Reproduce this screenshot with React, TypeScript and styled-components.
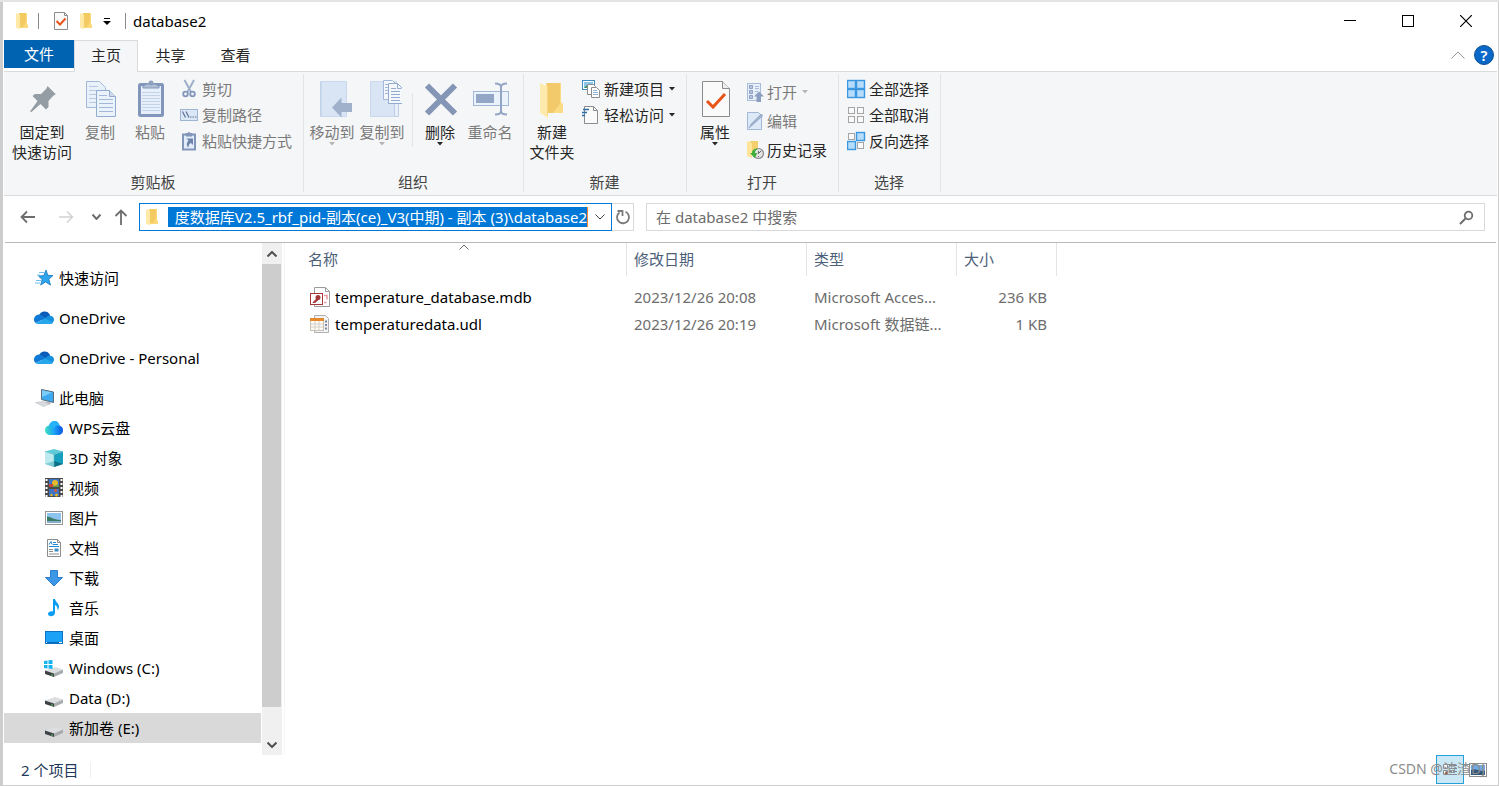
import React from "react";
import styled, { createGlobalStyle } from "styled-components";

const Global = createGlobalStyle`
  * { box-sizing: border-box; }
  body {
    margin: 0;
    background: #d2d2d2;
    font: 15px/20px "Noto Sans", "Noto Sans CJK SC", sans-serif;
    color: #000;
  }
  button, input { font: inherit; color: inherit; }
  button { background: none; border: 0; padding: 0; margin: 0; }
  svg { display: block; flex: none; }
`;

/* ---------- window frame ---------- */

const Desktop = styled.div`
  min-height: 100vh;
  padding: 2px 1px 1px 3px;
  display: flex;
  background: linear-gradient(#e4e4e4 0 2px, #cdcdcd 2px);
`;
const Window = styled.div`
  position: relative;
  flex: 1;
  min-width: 0;
  padding: 0 1px;
  display: flex;
  flex-direction: column;
  background: #fff;
`;

const TitleBar = styled.header`
  display: flex;
  align-items: center;
  height: 38px;
  padding: 0 2px 0 8px;
`;
const QuickButton = styled.button<{ $w: number }>`
  width: ${(p) => p.$w}px;
  display: flex;
  justify-content: center;
`;
const TitleDivider = styled.i`
  width: 1px;
  height: 16px;
  margin: 0 7px;
  background: #8a8a8a;
`;
const WindowTitle = styled.h1`
  flex: 1;
  margin: 0;
  font-size: 15px;
  line-height: 20px;
  font-weight: 400;
`;
const WindowButton = styled.button`
  width: 58px;
  height: 38px;
  display: flex;
  align-items: center;
  justify-content: center;
`;

/* ---------- ribbon tabs ---------- */

const TabBar = styled.nav`
  display: flex;
  height: 32px;
  border-bottom: 1px solid #dadbdc;
`;
const Tab = styled.button<{ $kind: "file" | "active" | "plain" }>`
  width: ${(p) => (p.$kind === "file" ? 70 : p.$kind === "active" ? 64 : 65)}px;
  height: ${(p) => (p.$kind === "file" ? 28 : 32)}px;
  padding-bottom: ${(p) => (p.$kind === "file" ? 0 : p.$kind === "active" ? 4 : 2)}px;
  color: ${(p) => (p.$kind === "file" ? "#fff" : "#262626")};
  background: ${(p) => (p.$kind === "file" ? "#0063b1" : p.$kind === "active" ? "#f5f6f7" : "none")};
  border: ${(p) => (p.$kind === "active" ? "1px solid #dadbdc" : "0")};
  border-bottom: 0;
`;
const TabTools = styled.div`
  margin-left: auto;
  display: flex;
  align-items: center;
  gap: 9px;
  padding: 0 3px 2px 0;
`;
const HelpButton = styled.button`
  width: 20px;
  height: 20px;
  border: 1px solid #10508c;
  border-radius: 50%;
  background: #0a69c8;
  color: #fff;
  font-size: 15px;
  line-height: 18px;
  font-weight: 600;
`;

/* ---------- ribbon ---------- */

const Ribbon = styled.div`
  display: flex;
  height: 124px;
  padding: 2px 0 3px;
  background: #f5f6f7;
  border-bottom: 1px solid #dadbdc;
`;
const Group = styled.section<{ $w: number; $pad: number }>`
  width: ${(p) => p.$w}px;
  padding-left: ${(p) => p.$pad}px;
  flex: none;
  display: flex;
  flex-direction: column;
  justify-content: space-between;
  border-right: 1px solid #e2e3e4;
`;
const GroupTools = styled.div`
  display: flex;
  padding-top: 2px;
`;
const GroupName = styled.h2<{ $pad: number }>`
  margin: 0 1px 0 -${(p) => p.$pad}px;
  font-size: 15px;
  line-height: 20px;
  font-weight: 400;
  text-align: center;
  color: #444;
`;
const BigButton = styled.button<{ $w?: number }>`
  width: ${(p) => p.$w ?? 50}px;
  padding-top: 4px;
  display: flex;
  flex-direction: column;
  align-items: center;
  color: #262626;
  white-space: pre-line;
  &:disabled { color: #7a7a7a; }
  > svg:first-child { margin-bottom: 4px; }
`;
const ToolDivider = styled.i`
  width: 1px;
  height: 54px;
  margin: 17px 2px 0 5px;
  background: #e2e3e4;
`;
const SmallList = styled.div<{ $tall?: boolean }>`
  display: grid;
  grid-auto-rows: ${(p) => (p.$tall ? 29 : 26)}px;
  align-content: start;
  padding: ${(p) => (p.$tall ? 1 : 0)}px 0 0 5px;
`;
const SmallButton = styled.button`
  display: flex;
  align-items: center;
  gap: 2px;
  color: #262626;
  white-space: nowrap;
  &:disabled { color: #7a7a7a; }
`;
const ArrowSlot = styled.span`
  padding-left: 2px;
`;

/* ---------- address row ---------- */

const AddressRow = styled.div`
  display: flex;
  align-items: flex-start;
  height: 47px;
  margin: 0 1px;
  padding: 7px 11px 0 9px;
  border-bottom: 1px solid #b9b9b9;
`;
const NavButton = styled.button<{ $w: number }>`
  width: ${(p) => p.$w}px;
  height: 28px;
  flex: none;
  display: flex;
  align-items: center;
  justify-content: center;
`;
const AddressBox = styled.div`
  flex: 473 473 473px;
  min-width: 0;
  height: 28px;
  display: flex;
  align-items: center;
  padding-left: 5px;
  border: 1px solid #0078d7;
`;
const AddressInput = styled.input`
  flex: 1;
  min-width: 0;
  height: 20px;
  margin-left: 9px;
  padding: 0;
  border: 0;
  border-right: 1px solid #ff8728;
  outline: 0;
  background: #0078d7;
  color: #fff;
  text-align: right;
`;
const DropButton = styled.button`
  width: 23px;
  display: flex;
  justify-content: center;
`;
const RefreshButton = styled.button`
  width: 22px;
  height: 28px;
  flex: none;
  display: flex;
  align-items: center;
  justify-content: center;
  border: 1px solid #d9d9d9;
  border-left: 0;
`;
const SearchBox = styled.label`
  flex: 839 839 839px;
  min-width: 0;
  height: 28px;
  margin-left: 12px;
  padding: 0 10px 0 9px;
  display: flex;
  align-items: center;
  border: 1px solid #d9d9d9;
`;
const SearchInput = styled.input`
  flex: 1;
  min-width: 0;
  padding: 0;
  border: 0;
  outline: 0;
  background: none;
  &::placeholder { color: #6d6d6d; opacity: 1; }
`;

/* ---------- body ---------- */

const Body = styled.div`
  flex: 1;
  display: flex;
`;
const Sidebar = styled.nav`
  width: 257px;
  flex: none;
  padding-top: 20px;
`;
const TreeItem = styled.a<{ $level: number; $selected?: boolean; $last?: boolean }>`
  display: flex;
  align-items: center;
  gap: 5px;
  height: 30px;
  margin-bottom: ${(p) => (p.$level === 0 && !p.$last ? 10 : 0)}px;
  padding-left: ${(p) => (p.$level === 0 ? 30 : 40)}px;
  color: #000;
  text-decoration: none;
  background: ${(p) => (p.$selected ? "#d9d9d9" : "none")};
`;
const ScrollTrack = styled.div`
  width: 20px;
  margin-left: 1px;
  flex: none;
  display: flex;
  flex-direction: column;
  background: #f0f0f0;
`;
const ScrollArrow = styled.button`
  width: 19px;
  height: 21px;
  display: flex;
  align-items: center;
  justify-content: center;
`;
const ScrollThumb = styled.div`
  width: 19px;
  flex: 443 1 0;
  background: #cdcdcd;
`;
const ScrollRest = styled.div`
  flex: 27 1 0;
`;
const Main = styled.main`
  flex: 1;
  min-width: 0;
  margin-left: 2px;
  padding-left: 16px;
  border-left: 1px solid #f5f5f5;
`;
const FileTable = styled.table`
  width: 756px;
  table-layout: fixed;
  border-collapse: collapse;
`;
const HeadCell = styled.th<{ $w: number }>`
  position: relative;
  width: ${(p) => p.$w}px;
  padding: 0 0 7px;
  text-align: left;
  font-weight: 400;
  color: #4c607a;
`;
const HeadLabel = styled.div`
  height: 33px;
  padding: 6px 7px;
  border-right: 1px solid #e5e5e5;
`;
const SortMark = styled.span`
  position: absolute;
  top: 1px;
  left: 0;
  right: 0;
  display: flex;
  justify-content: center;
`;
const Cell = styled.td<{ $right?: boolean }>`
  height: 27px;
  padding: 0 ${(p) => (p.$right ? 10 : 7)}px 0 7px;
  color: #6d6d6d;
  text-align: ${(p) => (p.$right ? "right" : "left")};
  white-space: nowrap;
`;
const FileName = styled.a`
  display: flex;
  align-items: center;
  gap: 5px;
  padding-left: 2px;
  color: #000;
  text-decoration: none;
`;

/* ---------- status bar ---------- */

const StatusBar = styled.footer`
  display: flex;
  align-items: center;
  height: 30px;
  padding: 0 10px 1px 17px;
`;
const StatusText = styled.span`
  padding-right: 12px;
  line-height: 16px;
  border-right: 1px solid #f0f0f0;
  color: #1e395b;
`;
const ViewButton = styled.button<{ $active?: boolean }>`
  width: 28px;
  height: 29px;
  display: flex;
  align-items: center;
  justify-content: center;
  background: ${(p) => (p.$active ? "#cbe8f6" : "none")};
  border: ${(p) => (p.$active ? "1px solid #26a0da" : "0")};
`;
const ViewButtons = styled.div`
  margin-left: auto;
  margin-right: -5px;
  display: flex;
`;
const Watermark = styled.span`
  position: absolute;
  right: 13px;
  bottom: 6px;
  font-size: 14px;
  color: #8c8c8c;
  pointer-events: none;
`;

/* ---------- icons ---------- */

type DrawProps = { w: number; h: number; children: React.ReactNode };
const Draw = ({ w, h, children }: DrawProps) => (
  <svg width={w} height={h} viewBox={`0 0 ${w} ${h}`} fill="none" aria-hidden="true">
    {children}
  </svg>
);

const FolderIcon = () => (
  <Draw w={14} h={18}>
    <path d="M4 1h8v11l1 1v3H5z" fill="#fbd978" />
    <path d="M4 1h7v9l-3 5H4z" fill="#f4cb62" />
    <path d="M1 1l4 2v14.500l-4-2z" fill="#ffe9a6" />
  </Draw>
);
const CheckDocIcon = () => (
  <Draw w={16} h={20}>
    <path d="M1.500 1.500h10l3 3v14h-13z" fill="#fafafa" stroke="#8c8c8c" />
    <path d="M11.500 1.500v3h3" stroke="#8c8c8c" />
    <path d="M3.500 10l3.500 3.500 5.500-6" stroke="#e9541b" strokeWidth="2" />
  </Draw>
);
const CustomizeIcon = () => (
  <Draw w={8} h={8}>
    <path d="M1 1.500h6" stroke="#000" />
    <path d="M0 4h8L4 8z" fill="#000" />
  </Draw>
);
const DownArrow = ({ color = "#262626" }: { color?: string }) => (
  <Draw w={8} h={4}>
    <path d="M1 0h6L4 3.500z" fill={color} />
  </Draw>
);
const Chevron = ({ up, w = 10, h = 6, color = "#555", stroke = 1 }: { up?: boolean; w?: number; h?: number; color?: string; stroke?: number }) => (
  <Draw w={w} h={h}>
    <path d={up ? `M.5 ${h - 0.5}L${w / 2} 1l${w / 2 - 0.5} ${h - 1.5}` : `M.5 .5l${w / 2 - 0.5} ${h - 1.5}L${w - 0.5} .5`} stroke={color} strokeWidth={stroke} />
  </Draw>
);

const PinIcon = () => (
  <Draw w={40} h={38}>
    <path d="M25.500 6l8.300 8.300-2.300 1.200-5 5.500v6L24 29.500 18.500 24 9.500 32 8 31.500l7.500-10.500-5-5 2.500-2h6l5.500-5.500z" fill="#949da3" />
  </Draw>
);
const CopyIcon = () => (
  <Draw w={40} h={38}>
    <path d="M6.500 1.500h13l6 6v20h-19z" fill="#e8f0fa" stroke="#a3b8d6" />
    <path d="M9 6.500h9M9 10.500h13M9 14.500h13M9 18.500h8M9 22.500h8" stroke="#b8c9e1" />
    <path d="M16.500 10.500h13l6 6v20h-19z" fill="#eaf2fb" stroke="#93abce" />
    <path d="M29.500 10.500v6h6" fill="#cfdcec" stroke="#93abce" />
    <path d="M19 15.500h8M19 19.500h14M19 23.500h14M19 27.500h14M19 31.500h14" stroke="#a3b8d6" />
  </Draw>
);
const PasteIcon = () => (
  <Draw w={40} h={38}>
    <rect x="9.500" y="4.500" width="23" height="31" rx="1" fill="#e6effa" stroke="#8296bb" strokeWidth="3" />
    <path d="M12 12.500h18M12 15.500h18M12 18.500h18M12 21.500h18M12 24.500h18M12 27.500h18M12 30.500h18" stroke="#c3d3e8" />
    <path d="M13 8V6l4-2h8l4 2v2z" fill="#b0bed5" stroke="#8296bb" />
    <circle cx="21" cy="3" r="2.500" fill="#8fa1c0" />
  </Draw>
);
const CutIcon = () => (
  <Draw w={20} h={20}>
    <path d="M4.500 1l6.500 12M14 1L7.500 13" stroke="#9fb0cb" strokeWidth="2" />
    <circle cx="5.500" cy="15" r="2.300" stroke="#8296bb" strokeWidth="1.800" />
    <circle cx="12.500" cy="15" r="2.300" stroke="#8296bb" strokeWidth="1.800" />
  </Draw>
);
const PathIcon = () => (
  <Draw w={20} h={20}>
    <rect x=".5" y="4.500" width="17" height="11" fill="#dbe7f6" stroke="#9fb4d3" />
    <path d="M2.500 6.500l3 6M6 6.500l3 6M10 12h1.500M12.500 12H14M15 12h1.500" stroke="#5e7299" strokeWidth="1.200" />
  </Draw>
);
const ShortcutIcon = () => (
  <Draw w={20} h={20}>
    <rect x="3" y="3.500" width="12" height="15" fill="#e3edf9" stroke="#8296bb" strokeWidth="2" />
    <path d="M6 5h6V2.500H10a1 1 0 0 0-2 0H6z" fill="#8296bb" stroke="#8296bb" />
    <path d="M6.500 7.500H13V14l-2-2c-2 1-2.500 2-2.500 4.500-2.500-2-2-4.500 0-7z" fill="#6f84ab" />
  </Draw>
);
const MoveToIcon = () => (
  <Draw w={40} h={38}>
    <path d="M8.500 1.500h26v35h-26z" fill="#d9e5f5" stroke="#c8d8ed" />
    <path d="M9 2v34" stroke="#bccde5" />
    <path d="M20 27.500l9.500-10v5.500H40v9H29.500v5.500z" fill="#a0b1cc" />
  </Draw>
);
const CopyToIcon = () => (
  <Draw w={40} h={38}>
    <path d="M8.500 1.500h26v35h-26z" fill="#d9e5f5" stroke="#c8d8ed" />
    <path d="M32.500 36.500v-12l2-2h2v14z" fill="#e7effa" stroke="#bccde5" />
    <path d="M21.500.5h9l3 3v16h-12z" fill="#f4f8fd" stroke="#a3b8d6" />
    <path d="M23 4.500h4M23 7.500h4M23 10.500h4M23 13.500h4" stroke="#a3b8d6" />
    <path d="M26.500 3.500h9l5 5v15h-14z" fill="#f4f8fd" stroke="#93abce" />
    <path d="M35.500 3.500v5h4" stroke="#93abce" />
    <path d="M29 8.500h5M29 11.500h9M29 14.500h9M29 17.500h9M29 20.500h9" stroke="#93abce" />
  </Draw>
);
const DeleteIcon = () => (
  <Draw w={40} h={38}>
    <path d="M7 5.500l28 28M35 5.500l-28 28" stroke="#8495b6" strokeWidth="6" />
  </Draw>
);
const RenameIcon = () => (
  <Draw w={40} h={38}>
    <rect x="3.500" y="11.500" width="35" height="14" fill="#eaf2fb" stroke="#a3b8d6" />
    <rect x="6" y="14" width="18" height="9" fill="#93a6c6" />
    <path d="M25 3.500c3.500 0 6 .5 6 3.500 0-3 2.500-3.500 6-3.500M31 6v26M25 34.500c3.500 0 6-.5 6-3.500 0 3 2.500 3.500 6 3.500" stroke="#93a6c6" strokeWidth="2" />
  </Draw>
);
const NewFolderIcon = () => (
  <Draw w={40} h={38}>
    <path d="M14 3h15v19l2 2v9H14z" fill="#fbdc85" />
    <path d="M15 3h13v21l-7 9h-6z" fill="#f2ca6b" />
    <path d="M8 3l8 4v31l-8-5z" fill="#ffeaae" />
    <path d="M15.500 7v28" stroke="#f7d67e" />
  </Draw>
);
const PropertiesIcon = () => (
  <Draw w={40} h={38}>
    <path d="M7.500 1.500h20l7 7v28h-27z" fill="#fafafa" stroke="#8c8c8c" />
    <path d="M27.500 1.500v7h7" fill="#eee" stroke="#8c8c8c" />
    <path d="M12 21l6 6 12-13" stroke="#e9541b" strokeWidth="3" />
  </Draw>
);
const NewItemIcon = () => (
  <Draw w={20} h={20}>
    <rect x=".5" y="1.500" width="12" height="9" fill="#fff" stroke="#3d8ec4" />
    <rect x="2" y="3" width="9" height="6" fill="#8cc8ea" />
    <path d="M2 9l3-3 3 3z" fill="#3f8f5d" />
    <path d="M5.500 5.500h6l2 2v8h-8z" fill="#fff" stroke="#8c8c8c" />
    <path d="M9.500 8.500h5l3 3v7h-8z" fill="#fff" stroke="#8c8c8c" />
    <path d="M11 11.500h4M11 13.500h5M11 15.500h5" stroke="#8fb4d6" />
  </Draw>
);
const EasyAccessIcon = () => (
  <Draw w={20} h={20}>
    <path d="M2.500 1.500h9l4 4v13h-13z" fill="#fafafa" stroke="#8c8c8c" />
    <path d="M11.500 1.500v4h4" stroke="#8c8c8c" />
    <path d="M1 4.500h6M0 7.500h5M-1 10.500h4" stroke="#2c6ea8" strokeWidth="1.300" />
  </Draw>
);
const OpenIcon = () => (
  <Draw w={20} h={20}>
    <rect x="2.500" y="1.500" width="13" height="17" fill="#e6effa" stroke="#a8bbd8" />
    <path d="M4.500 3.500h3v3h-3zM4.500 8.500h3v3h-3zM4.500 13.500h3v3h-3z" fill="#b4c4de" stroke="#8fa2c3" />
    <path d="M10 4.500h4M10 6.500h4M10 9.500h3" stroke="#a8bbd8" />
    <path d="M14 9.500l5 5h-3V20h-4.500v-5.500H9z" fill="#8d9fc0" />
  </Draw>
);
const EditIcon = () => (
  <Draw w={20} h={20}>
    <path d="M2.500 1.500h11l3 3v14h-14z" fill="#dde9f7" stroke="#a3b8d6" />
    <path d="M4 17l2-4L16 3l2 1.500-11 10z" fill="#a0b1cc" stroke="#8da1c2" strokeWidth=".6" />
  </Draw>
);
const HistoryIcon = () => (
  <Draw w={20} h={20}>
    <path d="M5 1h8v12H5z" fill="#f4cf6d" />
    <path d="M2 1l5 2v15l-5-2z" fill="#ffe49a" />
    <circle cx="13.500" cy="13.500" r="5" fill="#e2e2e2" stroke="#8c8c8c" strokeWidth="1.200" />
    <path d="M13.500 13.500l2.500-2.500M13.500 13.500v-2.500M13.500 16v1" stroke="#666" />
    <path d="M12 8.500C8 9 7 11 7 13H5l4.500 5 3-5H10c0-2 .5-3 2.500-3.500z" fill="#3fae3a" />
  </Draw>
);
const Tile = ({ x, y, on }: { x: number; y: number; on?: boolean }) => (
  <rect x={x + 0.5} y={y + 0.5} width={on ? 8 : 6} height={on ? 8 : 6} fill={on ? "#b5dcfa" : "#fafafa"} stroke={on ? "#3b97e0" : "#a5a5a5"} strokeWidth={on ? 1.400 : 1} />
);
const SelectAllIcon = () => (
  <Draw w={20} h={20}>
    <Tile x={0} y={1} on /><Tile x={9} y={1} on /><Tile x={0} y={10} on /><Tile x={9} y={10} on />
  </Draw>
);
const SelectNoneIcon = () => (
  <Draw w={20} h={20}>
    <Tile x={1} y={2} /><Tile x={10} y={2} /><Tile x={1} y={11} /><Tile x={10} y={11} />
  </Draw>
);
const InvertIcon = () => (
  <Draw w={20} h={20}>
    <Tile x={1} y={2} /><Tile x={9} y={1} on /><Tile x={0} y={10} on /><Tile x={10} y={11} />
  </Draw>
);

const ArrowIcon = ({ dir, color }: { dir: "left" | "right" | "up"; color: string }) => (
  <Draw w={16} h={16}>
    <path
      d={dir === "left" ? "M15 8H1.500M7 2.500L1.500 8 7 13.500" : dir === "right" ? "M1 8h13.500M9 2.500L14.500 8 9 13.500" : "M8 16V1.500M2.500 7L8 1.500 13.500 7"}
      stroke={color}
      strokeWidth={dir === "right" ? 1.500 : 1.800}
    />
  </Draw>
);
const RefreshIcon = () => (
  <Draw w={16} h={16}>
    <path d="M10.500 2.800a6 6 0 1 1-6 .6" stroke="#7a7a7a" strokeWidth="1.800" />
    <path d="M2.500 2h5v5" stroke="#7a7a7a" strokeWidth="1.800" />
  </Draw>
);
const SearchIcon = () => (
  <Draw w={15} h={15}>
    <circle cx="9.500" cy="5.500" r="3.800" stroke="#6d6d6d" strokeWidth="1.800" />
    <path d="M6.500 8.500L1 14" stroke="#6d6d6d" strokeWidth="2" />
  </Draw>
);

const StarIcon = () => (
  <Draw w={20} h={20}>
    <path d="M12 2l1.800 5.300 5.200.3-4.200 3.500 1.700 6-5-3.200-4.800 3.200 1.500-5.600L4.500 8l5.300-.4z" fill="#2fa5ee" stroke="#1676bd" strokeWidth=".8" />
    <path d="M5 4.500h5M3 7h3M2 12.500h5M1 15h5" stroke="#6bbdf2" />
  </Draw>
);
const OneDriveIcon = () => (
  <Draw w={20} h={20}>
    <path d="M5 7.500A6 6 0 0 1 15.500 6c.5.700.5 1.500.5 2.500L9 12 3 8.500z" fill="#0a5cb8" />
    <path d="M5 6.500C2 6.700 0 9 0 11.500c0 1.500.6 2.500 1.500 3.500L12 10 7.500 7.200C6.600 6.700 6 6.500 5 6.500z" fill="#0f78d4" />
    <path d="M15.500 7.500c2.700.3 4.500 2 4.500 4 0 2.500-1.800 4.500-4 4.500L9 11.500l3-2c1-1 2-2 3.500-2z" fill="#1490df" />
    <path d="M1.500 15L11 10.500l8 4c-.8 1-1.800 1.500-3 1.500H4.500c-1.200 0-2.300-.4-3-1z" fill="#28a8ea" />
  </Draw>
);
const PcIcon = () => (
  <Draw w={20} h={20}>
    <path d="M7.500 1.500L19.500 4v10.500L7.500 11.500z" fill="#3ba8f0" stroke="#5c6b78" />
    <path d="M8 2.200L18 4.400 8 9z" fill="#7cccf9" />
    <path d="M12 13l5 1.500-1 2-5-1.500z" fill="#b4babf" />
    <path d="M1.500 14.500l8-1 6 2.500-6 2.500z" fill="#d7dbdf" stroke="#b3b9bf" strokeWidth=".5" />
  </Draw>
);
const WpsIcon = () => (
  <Draw w={20} h={20}>
    <defs>
      <linearGradient id="wps" x1="0" x2="1" y1="0.600" y2="0.500">
        <stop offset="0" stopColor="#3fe0c0" />
        <stop offset="0.500" stopColor="#1ba0f5" />
        <stop offset="1" stopColor="#0a52e0" />
      </linearGradient>
    </defs>
    <path d="M5 7.500C6 4.500 8 3 10.500 3s4.500 2 5 4.500c2 .5 3.500 2.500 3.500 4.700 0 2.800-2 4.800-4.800 4.800H5.500C3 17 1 15 1 12.300 1 9.700 2.700 7.700 5 7.500z" fill="url(#wps)" />
    <path d="M5 7.500C6 4.500 8 3 10.500 3s4.500 2 5 4.500C12 7 10.500 9 9.500 11 8.500 8.500 7 7.500 5 7.500z" fill="#27b3fb" />
  </Draw>
);
const CubeIcon = () => (
  <Draw w={20} h={20}>
    <path d="M1 3.500L10 1l9 2.500-9 3z" fill="#5ecbd8" />
    <path d="M1 3.500l9 3V19l-9-3z" fill="#bdeaee" />
    <path d="M19 3.500l-9 3V19l9-3z" fill="#17a0bd" />
    <path d="M10 13l9 3-9 3z" fill="#0c6f86" />
    <path d="M10 13l-9 3 9 3z" fill="#7ccbd5" />
    <path d="M1 3.500l9 3 9-3M10 6.500V19" stroke="#5ab8c4" strokeWidth=".6" />
  </Draw>
);
const VideoIcon = () => (
  <Draw w={20} h={20}>
    <rect x="1" y="0" width="18" height="19" fill="#4a4a4a" />
    <path d="M2.500 1v18M17.500 1v18" stroke="#fff" strokeWidth="2" strokeDasharray="2 2" />
    <path d="M5 1h10v8H5zM5 11h10v7H5z" fill="#3d74c6" />
    <circle cx="11" cy="5" r="3" fill="#e8b928" />
    <path d="M5 6h4v3H5z" fill="#c8453a" />
    <path d="M9 8l6-1v2H9z" fill="#5aa449" />
    <circle cx="11.500" cy="12.500" r="1.500" fill="#d9583b" />
    <circle cx="7.500" cy="17" r="1.200" fill="#e8b928" />
    <circle cx="12.500" cy="17" r="1.500" fill="#e8b928" />
  </Draw>
);
const PictureIcon = () => (
  <Draw w={20} h={20}>
    <rect x="1.500" y="3.500" width="17" height="13" fill="#fff" stroke="#959595" />
    <rect x="3" y="5" width="14" height="10" fill="#8cc4ef" />
    <path d="M3 8.500c4 0 5 3 14 3.500v2H3z" fill="#3b7a66" />
    <path d="M3 13h14v2H3z" fill="#86aeca" />
  </Draw>
);
const DocumentIcon = () => (
  <Draw w={20} h={20}>
    <path d="M3.500 1.500h10l3 3v14h-13z" fill="#fff" stroke="#8c8c8c" />
    <path d="M13.500 1.500v3h3" stroke="#8c8c8c" />
    <path d="M5 6.500l2-3 1 3M9 4.500h3M9 6.500h5M5 8.500h10" stroke="#1f87d2" />
    <path d="M5 11.500h4M5 13.500h4M5 16h10" stroke="#8c8c8c" />
    <path d="M10.500 10.500h4v3h-4z" fill="#3a8bc4" />
  </Draw>
);
const DownloadIcon = () => (
  <Draw w={20} h={20}>
    <path d="M6.500 2.500h7v7h5L10 18 1.500 9.500h5z" fill="#3c97e6" stroke="#2a7ecb" />
  </Draw>
);
const MusicIcon = () => (
  <Draw w={20} h={20}>
    <path d="M9 1h2c.5 3 4 4.500 4 7.500 0 1.500-.5 2.500-1.500 4 .3-3-.5-4.500-2.500-5.500v8c0 2-2 3.200-4 3.200-1.700 0-3-.9-3-2.200 0-1.700 1.800-2.700 3.500-2.700.6 0 1 .1 1.500.3z" fill="#089df2" />
  </Draw>
);
const DesktopIcon = () => (
  <Draw w={20} h={20}>
    <rect x="1.500" y="3.500" width="17" height="12" fill="#1ba1f5" stroke="#0b73c4" />
    <path d="M2 14.500h16" stroke="#0a66b4" />
    <path d="M2 14.500h1M15 14.500h3" stroke="#fff" />
  </Draw>
);
const DriveIcon = ({ windows }: { windows?: boolean }) => (
  <Draw w={20} h={20}>
    <path d="M1 12.500l10-3.500 8 2.500-9 4z" fill="#dcdee0" />
    <path d="M1 12.500l9 3V19l-9-3z" fill="#3d4246" />
    <path d="M10 15.500l9-4V15l-9 4z" fill="#a8acaf" />
    <circle cx="8" cy="17" r=".8" fill="#62d65a" />
    {windows && <path d="M0 3l3.500-.5V6H0zM4.500 2.300L8.500 2v4h-4zM0 7h3.500v3.500L0 10zM4.500 7h4v4l-4-.5z" fill="#16b4ef" />}
  </Draw>
);

const MdbIcon = () => (
  <Draw w={20} h={20}>
    <path d="M4.500.5h11l4 4v15h-15z" fill="#fff" stroke="#9c9c9c" />
    <path d="M15.500.5v4h4" stroke="#9c9c9c" />
    <path d="M14 8.500h3v4M14 15.500h2.500" stroke="#e59aa0" strokeWidth="1.500" />
    <rect x=".5" y="6.500" width="12" height="11" fill="#fff" stroke="#a4373a" />
    <circle cx="8" cy="10.500" r="2.500" fill="#a4373a" />
    <path d="M7.500 11L3 15.500h2L9 12z" fill="#a4373a" stroke="#a4373a" />
  </Draw>
);
const UdlIcon = () => (
  <Draw w={20} h={20}>
    <path d="M4.500 1.500h11l3 3v14h-14z" fill="#f3f3f3" stroke="#b0b0b0" />
    <path d="M16 6.500v9" stroke="#7c86a0" strokeWidth="2" strokeDasharray="2 1.500" />
    <rect x=".5" y="4.500" width="13" height="12" fill="#fdfbf8" stroke="#c9c0b4" />
    <path d="M0 4h14v3H0z" fill="#e58a2b" />
    <path d="M1 10h12M1 13h12M5 7v9M9 7v9" stroke="#d5cfc6" />
  </Draw>
);
const DetailsViewIcon = () => (
  <Draw w={20} h={20}>
    <path d="M3.500 4.500h4v4h-4zM3.500 10.500h4v4h-4z" fill="#fff" stroke="#8c8c8c" />
    <path d="M5 12h2v2H5z" fill="#c0392b" />
    <path d="M9 5.500h3M13 5.500h4M9 8.500h3M13 8.500h4M9 11.500h3M13 11.500h4M9 14.500h3M13 14.500h4" stroke="#7c8a94" />
  </Draw>
);
const LargeViewIcon = () => (
  <Draw w={18} h={14}>
    <rect x=".5" y=".5" width="17" height="13" fill="#fff" stroke="#8c8c8c" />
    <rect x="2" y="2" width="14" height="10" fill="#72a9e4" />
    <path d="M2 7c4-2 6 1 14 1v4H2z" fill="#33587a" />
  </Draw>
);

/* ---------- data ---------- */

const tree = [
  { label: "快速访问", icon: <StarIcon />, level: 0 },
  { label: "OneDrive", icon: <OneDriveIcon />, level: 0 },
  { label: "OneDrive - Personal", icon: <OneDriveIcon />, level: 0 },
  { label: "此电脑", icon: <PcIcon />, level: 0, last: true },
  { label: "WPS云盘", icon: <WpsIcon />, level: 1 },
  { label: "3D 对象", icon: <CubeIcon />, level: 1 },
  { label: "视频", icon: <VideoIcon />, level: 1 },
  { label: "图片", icon: <PictureIcon />, level: 1 },
  { label: "文档", icon: <DocumentIcon />, level: 1 },
  { label: "下载", icon: <DownloadIcon />, level: 1 },
  { label: "音乐", icon: <MusicIcon />, level: 1 },
  { label: "桌面", icon: <DesktopIcon />, level: 1 },
  { label: "Windows (C:)", icon: <DriveIcon windows />, level: 1 },
  { label: "Data (D:)", icon: <DriveIcon />, level: 1 },
  { label: "新加卷 (E:)", icon: <DriveIcon />, level: 1, selected: true },
];

const columns = [
  { label: "名称", w: 326, sorted: true },
  { label: "修改日期", w: 180 },
  { label: "类型", w: 150 },
  { label: "大小", w: 100 },
];

const files = [
  { name: "temperature_database.mdb", icon: <MdbIcon />, date: "2023/12/26 20:08", type: "Microsoft Acces...", size: "236 KB" },
  { name: "temperaturedata.udl", icon: <UdlIcon />, date: "2023/12/26 20:19", type: "Microsoft 数据链...", size: "1 KB" },
];

const GREY = "#b5b5b5";

type RibbonGroupProps = { name: string; w: number; pad?: number; children: React.ReactNode };
const RibbonGroup = ({ name, w, pad = 3, children }: RibbonGroupProps) => (
  <Group $w={w} $pad={pad}>
    <GroupTools>{children}</GroupTools>
    <GroupName $pad={pad}>{name}</GroupName>
  </Group>
);

export default function App() {
  return (
    <Desktop>
      <Global />
      <Window>
        <TitleBar>
          <QuickButton $w={19} aria-label="database2"><FolderIcon /></QuickButton>
          <TitleDivider />
          <QuickButton $w={30} aria-label="属性"><CheckDocIcon /></QuickButton>
          <QuickButton $w={20} aria-label="新建文件夹"><FolderIcon /></QuickButton>
          <QuickButton $w={22} aria-label="自定义快速访问工具栏"><CustomizeIcon /></QuickButton>
          <TitleDivider />
          <WindowTitle>database2</WindowTitle>
          <WindowButton aria-label="最小化"><Draw w={12} h={12}><path d="M0 5.500h12" stroke="#000" /></Draw></WindowButton>
          <WindowButton aria-label="最大化"><Draw w={12} h={12}><rect x=".5" y=".5" width="11" height="11" stroke="#000" /></Draw></WindowButton>
          <WindowButton aria-label="关闭"><Draw w={12} h={12}><path d="M0 0l12 12M12 0L0 12" stroke="#000" strokeWidth="1.200" /></Draw></WindowButton>
        </TitleBar>

        <TabBar>
          <Tab $kind="file">文件</Tab>
          <Tab $kind="active">主页</Tab>
          <Tab $kind="plain">共享</Tab>
          <Tab $kind="plain">查看</Tab>
          <TabTools>
            <button aria-label="最小化功能区"><Chevron up w={14} h={8} color="#9a9a9a" /></button>
            <HelpButton aria-label="帮助">?</HelpButton>
          </TabTools>
        </TabBar>

        <Ribbon>
          <RibbonGroup name="剪贴板" w={300} pad={5}>
            <BigButton $w={66}><PinIcon />{"固定到\n快速访问"}</BigButton>
            <BigButton disabled><CopyIcon />复制</BigButton>
            <BigButton disabled><PasteIcon />粘贴</BigButton>
            <SmallList>
              <SmallButton disabled><CutIcon />剪切</SmallButton>
              <SmallButton disabled><PathIcon />复制路径</SmallButton>
              <SmallButton disabled><ShortcutIcon />粘贴快捷方式</SmallButton>
            </SmallList>
          </RibbonGroup>
          <RibbonGroup name="组织" w={220}>
            <BigButton disabled><MoveToIcon />移动到<DownArrow color={GREY} /></BigButton>
            <BigButton disabled><CopyToIcon />复制到<DownArrow color={GREY} /></BigButton>
            <ToolDivider />
            <BigButton><DeleteIcon />删除<DownArrow /></BigButton>
            <BigButton disabled><RenameIcon />重命名</BigButton>
          </RibbonGroup>
          <RibbonGroup name="新建" w={163}>
            <BigButton><NewFolderIcon />{"新建\n文件夹"}</BigButton>
            <SmallList>
              <SmallButton><NewItemIcon />新建项目<ArrowSlot><DownArrow /></ArrowSlot></SmallButton>
              <SmallButton><EasyAccessIcon />轻松访问<ArrowSlot><DownArrow /></ArrowSlot></SmallButton>
            </SmallList>
          </RibbonGroup>
          <RibbonGroup name="打开" w={152}>
            <BigButton><PropertiesIcon />属性<DownArrow /></BigButton>
            <SmallList $tall>
              <SmallButton disabled><OpenIcon />打开<ArrowSlot><DownArrow color={GREY} /></ArrowSlot></SmallButton>
              <SmallButton disabled><EditIcon />编辑</SmallButton>
              <SmallButton><HistoryIcon />历史记录</SmallButton>
            </SmallList>
          </RibbonGroup>
          <RibbonGroup name="选择" w={102}>
            <SmallList>
              <SmallButton><SelectAllIcon />全部选择</SmallButton>
              <SmallButton><SelectNoneIcon />全部取消</SmallButton>
              <SmallButton><InvertIcon />反向选择</SmallButton>
            </SmallList>
          </RibbonGroup>
        </Ribbon>

        <AddressRow>
          <NavButton $w={28} aria-label="返回"><ArrowIcon dir="left" color="#6d6d6d" /></NavButton>
          <NavButton $w={48} aria-label="前进"><ArrowIcon dir="right" color="#d2d2d2" /></NavButton>
          <NavButton $w={13} aria-label="最近浏览的位置"><Chevron w={9} h={6} color="#6d6d6d" stroke={2} /></NavButton>
          <NavButton $w={36} aria-label="上移"><ArrowIcon dir="up" color="#6d6d6d" /></NavButton>
          <AddressBox>
            <FolderIcon />
            <AddressInput aria-label="地址" defaultValue={"度数据库V2.5_rbf_pid-副本(ce)_V3(中期) - 副本 (3)\\database2"} />
            <DropButton aria-label="以前的位置"><Chevron color="#444" /></DropButton>
          </AddressBox>
          <RefreshButton aria-label="刷新"><RefreshIcon /></RefreshButton>
          <SearchBox>
            <SearchInput aria-label="搜索" placeholder="在 database2 中搜索" />
            <SearchIcon />
          </SearchBox>
        </AddressRow>

        <Body>
          <Sidebar>
            {tree.map((t) => (
              <TreeItem key={t.label} href="#" $level={t.level} $selected={t.selected} $last={t.last}>
                {t.icon}
                {t.label}
              </TreeItem>
            ))}
          </Sidebar>
          <ScrollTrack>
            <ScrollArrow aria-label="向上滚动"><Chevron up color="#505050" stroke={2} /></ScrollArrow>
            <ScrollThumb />
            <ScrollRest />
            <ScrollArrow aria-label="向下滚动"><Chevron color="#505050" stroke={2} /></ScrollArrow>
          </ScrollTrack>
          <Main>
            <FileTable>
              <thead>
                <tr>
                  {columns.map((c) => (
                    <HeadCell key={c.label} $w={c.w}>
                      <HeadLabel>{c.label}</HeadLabel>
                      {c.sorted && <SortMark><Chevron up color="#6d6d6d" /></SortMark>}
                    </HeadCell>
                  ))}
                </tr>
              </thead>
              <tbody>
                {files.map((f) => (
                  <tr key={f.name}>
                    <Cell><FileName href="#">{f.icon}{f.name}</FileName></Cell>
                    <Cell>{f.date}</Cell>
                    <Cell>{f.type}</Cell>
                    <Cell $right>{f.size}</Cell>
                  </tr>
                ))}
              </tbody>
            </FileTable>
          </Main>
        </Body>

        <StatusBar>
          <StatusText>2 个项目</StatusText>
          <ViewButtons>
            <ViewButton $active aria-label="详细信息"><DetailsViewIcon /></ViewButton>
            <ViewButton aria-label="大缩略图"><LargeViewIcon /></ViewButton>
          </ViewButtons>
        </StatusBar>
        <Watermark>CSDN @渣渣DJ</Watermark>
      </Window>
    </Desktop>
  );
}
